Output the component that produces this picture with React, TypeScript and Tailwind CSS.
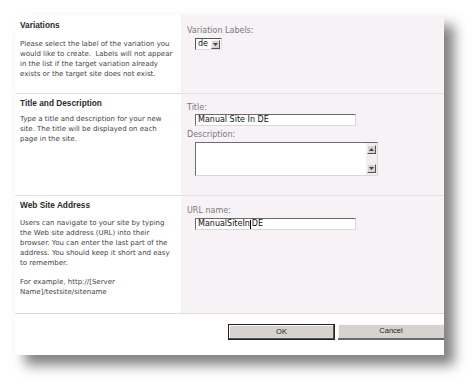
import React from 'react';

const Label: React.FC<{ children: React.ReactNode }> = ({ children }) => (
  <div className="text-[8px] leading-[9px] text-[#7a7a7a] font-['DejaVu_Sans',sans-serif]">{children}</div>
);

const TextBox: React.FC<{ value: string; caret?: number }> = ({ value, caret }) => (
  <div className="ml-[8px] flex h-[12px] w-[161px] items-center border border-t-[#6b6b6b] border-l-[#6b6b6b] border-b-[#d9d9d9] border-r-[#d9d9d9] bg-white pl-[2px] text-[8px] text-[#111] font-['DejaVu_Sans',sans-serif]">
    {caret === undefined ? (
      value
    ) : (
      <>
        {value.slice(0, caret)}
        <span className="mx-[0.5px] inline-block h-[9px] w-px bg-black" />
        {value.slice(caret)}
      </>
    )}
  </div>
);

const ArrowBtn: React.FC<{ up?: boolean }> = ({ up }) => (
  <div className="flex h-[9px] w-[9px] items-center justify-center border border-t-[#f0f0f0] border-l-[#f0f0f0] border-b-[#555] border-r-[#555] bg-[#d8d5d0]">
    <svg width="5" height="3" viewBox="0 0 5 3">
      <path d={up ? 'M0 3 L2.5 0 L5 3 Z' : 'M0 0 L2.5 3 L5 0 Z'} fill="#444" />
    </svg>
  </div>
);

const SectionTitle: React.FC<{ children: React.ReactNode }> = ({ children }) => (
  <div className="text-[8.3px] font-bold leading-[10px] text-[#2b2b2b] font-['Liberation_Sans',sans-serif]">
    {children}
  </div>
);

const Desc: React.FC<{ children: React.ReactNode; className?: string }> = ({ children, className }) => (
  <div className={`text-[7px] leading-[10px] text-[#444] font-['DejaVu_Sans',sans-serif] ${className ?? ''}`}>
    {children}
  </div>
);

export default function App() {
  return (
    <div className="h-[386px] w-[474px] overflow-hidden bg-white pl-[15px] pt-[15px] font-['Liberation_Sans',sans-serif]">
      <div className="flex h-[340px] w-[429px] flex-col bg-white shadow-[10px_10px_12px_rgba(0,0,0,0.5)]">
        {/* Variations */}
        <div className="grid h-[79px] grid-cols-[166px_1fr] border-b border-[#e2e0e0]">
          <div className="px-[5px] pt-[5px]">
            <SectionTitle>Variations</SectionTitle>
            <Desc className="mt-[9px] w-[159px]">
              Please select the label of the variation you would like to create.&nbsp; Labels will not appear in the list if the target variation already exists or the target site does not exist.
            </Desc>
          </div>
          <div className="bg-[#f6f2f5] pl-[6px] pt-[11px]">
            <Label>Variation Labels:</Label>
            <div className="ml-[8px] mt-[3px] flex h-[12px] w-[27px] items-center justify-between border border-t-[#555] border-l-[#555] border-b-[#ddd] border-r-[#ddd] bg-white pl-[2px] pr-[1px] text-[8px] text-[#111] font-['DejaVu_Sans',sans-serif]">
              de
              <ArrowBtn />
            </div>
          </div>
        </div>

        {/* Title and Description */}
        <div className="grid h-[102px] grid-cols-[166px_1fr] border-b border-[#e2e0e0]">
          <div className="px-[5px] pt-[4px]">
            <SectionTitle>Title and Description</SectionTitle>
            <Desc className="mt-[6px] w-[152px]">
              Type a title and description for your new site. The title will be displayed on each page in the site.
            </Desc>
          </div>
          <div className="bg-[#f6f2f5] pl-[6px] pt-[9px]">
            <Label>Title:</Label>
            <div className="mt-[2px]">
              <TextBox value="Manual Site In DE" />
            </div>
            <div className="mt-[4px]">
              <Label>Description:</Label>
            </div>
            <div className="ml-[8px] mt-[3px] flex h-[34px] w-[183px] border border-t-[#6b6b6b] border-l-[#6b6b6b] border-b-[#d9d9d9] border-r-[#d9d9d9] bg-white">
              <div className="flex-1" />
              <div className="flex w-[11px] flex-col items-center justify-between bg-[#f0eeee] py-[2px]">
                <ArrowBtn up />
                <ArrowBtn />
              </div>
            </div>
          </div>
        </div>

        {/* Web Site Address */}
        <div className="grid h-[118px] grid-cols-[166px_1fr] border-b border-[#dcdada]">
          <div className="px-[5px] pt-[4px]">
            <SectionTitle>Web Site Address</SectionTitle>
            <Desc className="mt-[8px] w-[152px]">
              Users can navigate to your site by typing the Web site address (URL) into their browser. You can enter the last part of the address. You should keep it short and easy to remember.
            </Desc>
            <Desc className="mt-[9px] w-[110px]">For example, http://[Server Name]/testsite/sitename</Desc>
          </div>
          <div className="bg-[#f6f2f5] pl-[6px] pt-[10px]">
            <Label>URL name:</Label>
            <div className="mt-[3px]">
              <TextBox value="ManualSiteInDE" caret={12} />
            </div>
          </div>
        </div>

        {/* Footer */}
        <div className="flex flex-1 items-start justify-end overflow-hidden pt-[10px]">
          <div className="flex gap-[3px]">
            <button className="flex h-[16px] w-[107px] items-center justify-center border border-[#222] bg-[#d6d3ce] text-[7.5px] text-[#222] shadow-[inset_-1px_-1px_0_#555,inset_1px_1px_0_#fafafa]">
              OK
            </button>
            <button className="flex h-[16px] w-[106px] items-center justify-center border-b-2 border-[#6b6b6b] bg-[#d6d3ce] text-[7.5px] text-[#222] shadow-[inset_1px_1px_0_#fafafa]">
              Cancel
            </button>
          </div>
        </div>
      </div>
    </div>
  );
}
